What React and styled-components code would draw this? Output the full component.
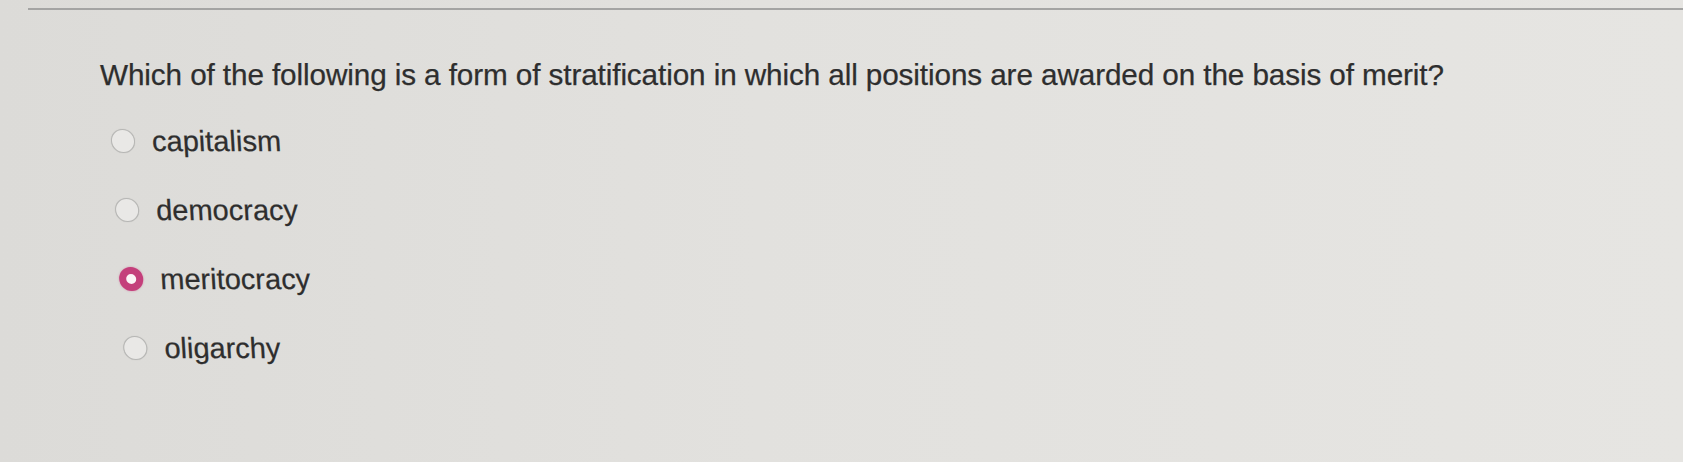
import React from 'react';
import styled, { createGlobalStyle } from 'styled-components';

const GlobalStyle = createGlobalStyle`
  html, body {
    margin: 0;
    padding: 0;
  }
  body {
    width: 1683px;
    height: 462px;
    overflow: hidden;
    background: linear-gradient(90deg, #dcdbd8 0%, #e2e1de 45%, #e6e5e2 100%);
    font-family: "Liberation Sans", Arial, sans-serif;
    color: #2e2e2e;
    -webkit-text-stroke: 0.25px #2e2e2e;
  }
`;

const Page = styled.div`
  padding: 8px 0 0 28px;
  height: 462px;
  box-sizing: border-box;
`;

const Card = styled.div`
  border-top: 2px solid #a4a4a3;
  padding: 48px 0 0 72px;
`;

const Question = styled.div`
  font-size: 29.7px;
  line-height: 34px;
  letter-spacing: -0.1px;
  margin: 0 0 32px;
`;

const Options = styled.ul`
  list-style: none;
  margin: 0;
  padding: 0 0 0 10px;
  display: flex;
  flex-direction: column;
  gap: 35px;
  transform: skewX(3.4deg);
  transform-origin: 0 0;
`;

const Option = styled.li`
  display: flex;
  align-items: center;
  gap: 17px;
  height: 34px;
  font-size: 29px;
`;

const Radio = styled.span`
  flex: none;
  width: 24px;
  height: 24px;
  border-radius: 50%;
  box-sizing: border-box;
  border: ${p => (p.checked ? '7px solid #c43f7b' : '1.5px solid #b7b7b5')};
  background: ${p => (p.checked ? '#fbf3f6' : '#e9e8e6')};
  box-shadow: ${p => (p.checked ? '0 0 2px rgba(196,63,123,0.5)' : '0 0 1px rgba(0,0,0,0.15)')};
`;

const choices = ['capitalism', 'democracy', 'meritocracy', 'oligarchy'];

export default function App() {
  const selected = 'meritocracy';
  return (
    <>
      <GlobalStyle />
      <Page>
        <Card>
          <Question>
            Which of the following is a form of stratification in which all positions are awarded on the basis of merit?
          </Question>
          <Options>
            {choices.map(c => (
              <Option key={c}>
                <Radio checked={c === selected} />
                <span>{c}</span>
              </Option>
            ))}
          </Options>
        </Card>
      </Page>
    </>
  );
}
